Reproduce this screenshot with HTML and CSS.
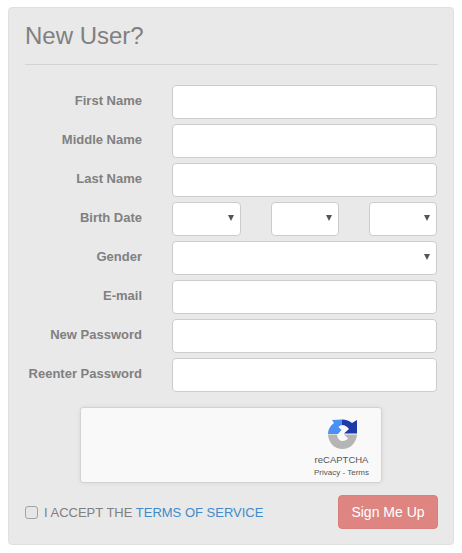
FILE: index.html
```html
<!DOCTYPE html>
<html lang="en">
<head>
    <meta charset="UTF-8">
    <title>New User?</title>
    <link rel="stylesheet" href="styles.css">
</head>
<body>
    <form class="panel">
        <h2 class="panel-title">New User?</h2>
        <div class="rows">
            <div class="row">
                <label for="firstName">First Name</label>
                <input type="text" id="firstName">
            </div>
            <div class="row">
                <label for="middleName">Middle Name</label>
                <input type="text" id="middleName">
            </div>
            <div class="row">
                <label for="lastName">Last Name</label>
                <input type="text" id="lastName">
            </div>
            <div class="row">
                <label>Birth Date</label>
                <div class="date-group">
                    <div class="select-wrap"><select></select></div>
                    <div class="select-wrap"><select></select></div>
                    <div class="select-wrap"><select></select></div>
                </div>
            </div>
            <div class="row">
                <label for="gender">Gender</label>
                <div class="select-wrap"><select id="gender"></select></div>
            </div>
            <div class="row">
                <label for="email">E-mail</label>
                <input type="text" id="email">
            </div>
            <div class="row">
                <label for="password">New Password</label>
                <input type="password" id="password">
            </div>
            <div class="row">
                <label for="password2">Reenter Password</label>
                <input type="password" id="password2">
            </div>
        </div>
        <div class="captcha">
            <div class="captcha-brand">
                <svg class="captcha-logo" viewBox="0 0 30 30" width="30" height="30">
                    <path fill="#4a90f5" d="M5 1 L15 0.5 V6 C13.5 6 12.5 7 11.5 8 L14.5 11 L11 15 H1 C1 10.5 3 7 7 4 Z"/>
                    <path fill="#1c3aa9" d="M15 0.5 C19 0.5 22.5 2 25 4 L30 1 V14.5 H17 L22 10 C20.5 8 18 6 15 6 Z"/>
                    <path fill="#b5b5b5" d="M1 15.5 H10 C10.5 19.5 12.5 22 15.5 22 C18 22 20 21 21 19.5 L17 15.5 H30 C29.5 24 23 30 15.5 30 C7.5 30 1.5 24 1 15.5 Z"/>
                </svg>
                <div class="captcha-name">reCAPTCHA</div>
                <div class="captcha-links">Privacy - Terms</div>
            </div>
        </div>
        <div class="panel-footer">
            <label class="accept">
                <input type="checkbox">
                <span>I ACCEPT THE <a href="#">TERMS OF SERVICE</a></span>
            </label>
            <button type="button" class="btn">Sign Me Up</button>
        </div>
    </form>
</body>
</html>
```

FILE: styles.css
```css
* {
    box-sizing: border-box;
}

body {
    margin: 0;
    background: #fff;
    font-family: "Liberation Sans", Arial, sans-serif;
    font-size: 13px;
    color: #808080;
}

/* Panel */
.panel {
    width: 446px;
    height: 538px;
    margin: 7px 0 0 8px;
    padding: 0 15px 0 16px;
    background: #e9e9e9;
    border: 1px solid #e0e0e0;
    border-radius: 4px;
}

.panel-title {
    height: 57px;
    margin: 0;
    padding-top: 13px;
    font-size: 24px;
    font-weight: normal;
    line-height: 30px;
    border-bottom: 1px solid #d3d3d3;
}

/* Form rows */
.rows {
    display: flex;
    flex-direction: column;
    gap: 5px;
    margin-top: 20px;
}

.row {
    display: grid;
    grid-template-columns: 117px 265px;
    column-gap: 30px;
    align-items: center;
}

.row label {
    padding-bottom: 3px;
    font-weight: bold;
    text-align: right;
    white-space: nowrap;
}

input[type="text"],
input[type="password"],
select {
    display: block;
    width: 100%;
    height: 34px;
    background: #fff;
    border: 1px solid #ccc;
    border-radius: 4px;
    outline: none;
    appearance: none;
}

.date-group {
    display: grid;
    grid-template-columns: 69px 68px 68px;
    column-gap: 30px;
}

.select-wrap {
    position: relative;
}

.select-wrap::after {
    content: "";
    position: absolute;
    top: 13px;
    right: 7px;
    border-top: 6px solid #555;
    border-left: 3.5px solid transparent;
    border-right: 3.5px solid transparent;
}

/* Captcha box */
.captcha {
    display: flex;
    justify-content: flex-end;
    width: 302px;
    height: 76px;
    margin: 15px 0 0 55px;
    padding-right: 12px;
    background: #f9f9f9;
    border: 1px solid #d3d3d3;
    border-radius: 3px;
    box-shadow: 0 0 4px rgba(0, 0, 0, 0.08);
}

.captcha-brand {
    display: flex;
    flex-direction: column;
    align-items: center;
    padding-top: 11px;
    color: #555;
}

.captcha-logo {
    display: block;
}

.captcha-name {
    margin-top: 4px;
    font-size: 9.5px;
    line-height: 14px;
}

.captcha-links {
    margin-top: 0;
    font-size: 8px;
    line-height: 11px;
}

/* Footer */
.panel-footer {
    display: flex;
    justify-content: space-between;
    align-items: center;
    margin-top: 12px;
}

.accept {
    display: flex;
    align-items: center;
    gap: 6px;
}

.accept input {
    width: 13px;
    height: 13px;
    margin: 0;
    background: #e6e6e6;
    border: 1px solid #a3a3a3;
    border-radius: 3px;
    appearance: none;
}

.accept a {
    color: #428bca;
    text-decoration: none;
}

.btn {
    width: 100px;
    height: 34px;
    padding: 0;
    background: #de8582;
    color: #fff;
    border: 1px solid #d9807d;
    border-radius: 4px;
    font-family: inherit;
    font-size: 14px;
}
```
